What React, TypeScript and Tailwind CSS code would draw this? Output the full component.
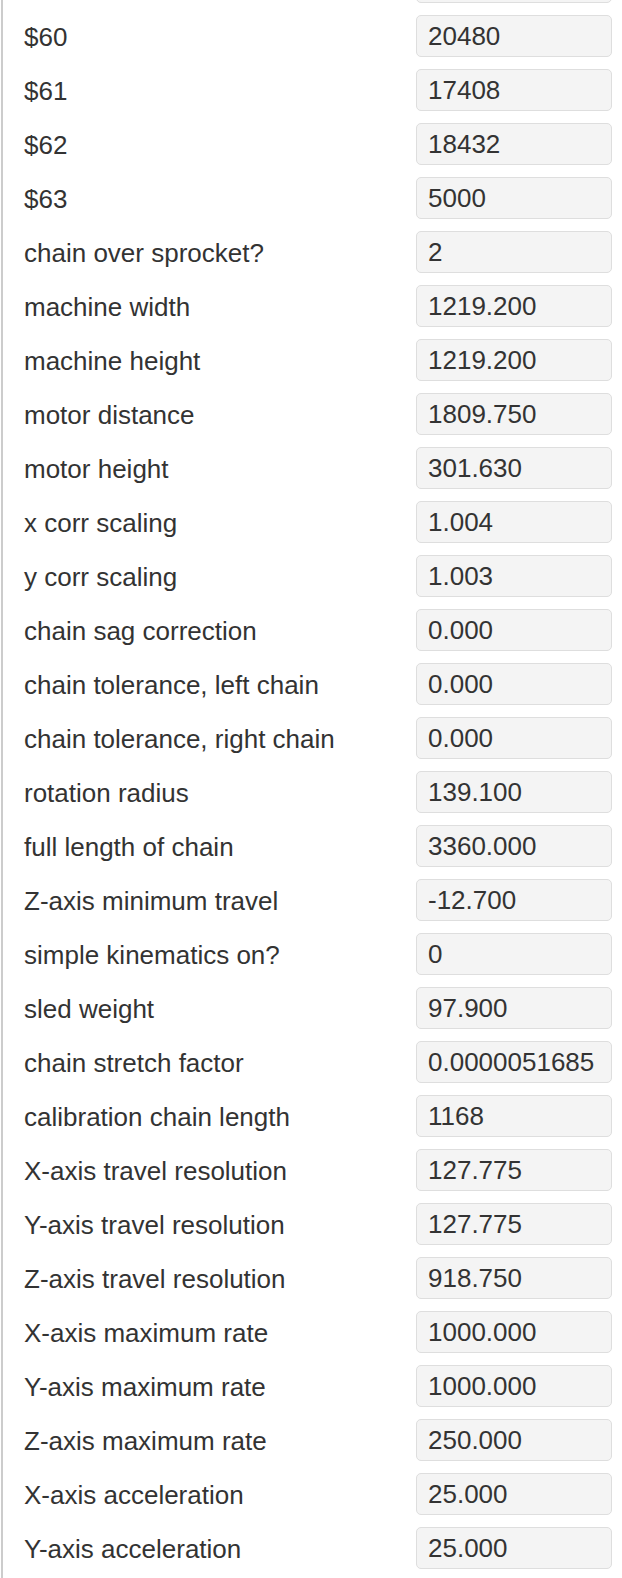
const ROWS: [string, string][] = [
  ["", ""],
  ["$60", "20480"],
  ["$61", "17408"],
  ["$62", "18432"],
  ["$63", "5000"],
  ["chain over sprocket?", "2"],
  ["machine width", "1219.200"],
  ["machine height", "1219.200"],
  ["motor distance", "1809.750"],
  ["motor height", "301.630"],
  ["x corr scaling", "1.004"],
  ["y corr scaling", "1.003"],
  ["chain sag correction", "0.000"],
  ["chain tolerance, left chain", "0.000"],
  ["chain tolerance, right chain", "0.000"],
  ["rotation radius", "139.100"],
  ["full length of chain", "3360.000"],
  ["Z-axis minimum travel", "-12.700"],
  ["simple kinematics on?", "0"],
  ["sled weight", "97.900"],
  ["chain stretch factor", "0.0000051685"],
  ["calibration chain length", "1168"],
  ["X-axis travel resolution", "127.775"],
  ["Y-axis travel resolution", "127.775"],
  ["Z-axis travel resolution", "918.750"],
  ["X-axis maximum rate", "1000.000"],
  ["Y-axis maximum rate", "1000.000"],
  ["Z-axis maximum rate", "250.000"],
  ["X-axis acceleration", "25.000"],
  ["Y-axis acceleration", "25.000"],
];

export default function App() {
  return (
    <div
      className="h-[1578px] overflow-hidden bg-white pl-[1px] text-[#333]"
      style={{ fontFamily: '"Liberation Sans", Arial, sans-serif' }}
    >
      <div className="flex h-full flex-col border-l-2 border-[#cccccc] pl-[21px] pr-[10px]">
        <div className="-mt-[45px]">
          {ROWS.map(([label, value], i) => (
            <div key={i} className="flex h-[54px] items-center">
              <div className="flex-1 pt-[2px] text-[26px] leading-none">{label}</div>
              <input
                readOnly
                value={value}
                className="h-[42px] w-[196px] rounded-[5px] border border-[#dedede] bg-[#f4f4f4] px-[11px] text-[26px] text-[#333] outline-none"
                style={{ fontFamily: '"Liberation Sans", Arial, sans-serif' }}
              />
            </div>
          ))}
        </div>
      </div>
    </div>
  );
}
